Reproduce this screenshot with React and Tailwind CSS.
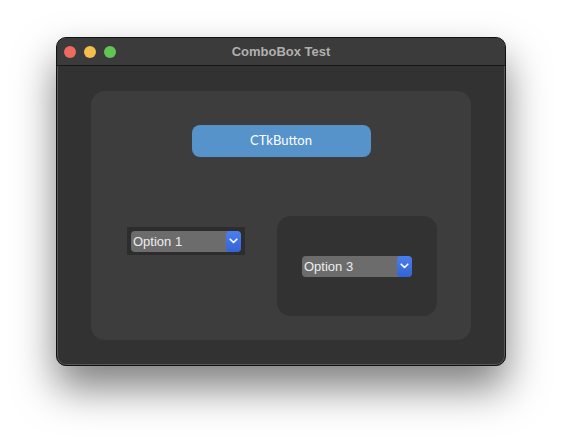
import React from "react";

const Chevron = () => (
    <svg width="9" height="6" viewBox="0 0 9 6" fill="none">
        <polyline points="1.2,1.2 4.5,4.5 7.8,1.2" stroke="white" strokeWidth="1.6" strokeLinecap="round" strokeLinejoin="round" />
    </svg>
);

const ComboBox = ({ value }) => (
    <div className="flex h-[21px] w-[110px] rounded-[4px] bg-[#6c6c6c] overflow-hidden">
        <div className="flex-1 flex items-center pl-[2px] text-[13px] text-[#ececec] leading-none" style={{ fontFamily: '"Liberation Sans", Arial, sans-serif' }}>
            {value}
        </div>
        <div className="w-[15px] flex items-center justify-center rounded-[4px] bg-gradient-to-b from-[#4a7ff0] to-[#3463d6]">
            <Chevron />
        </div>
    </div>
);

export default function App() {
    return (
        <div className="w-[562px] h-[440px] bg-white pl-[56px] pt-[37px]">
            <div className="w-[450px] h-[329px] rounded-[10px] border border-[#111] bg-[#323232] overflow-hidden flex flex-col shadow-[0_22px_40px_rgba(0,0,0,0.5),inset_0_0_0_1px_rgba(255,255,255,0.18)]">
                <div className="relative h-[28px] shrink-0 bg-[#3b3b3b] border-b border-[#161616] flex items-center justify-center">
                    <div className="absolute left-[7px] top-[8px] flex gap-[8px]">
                        <div className="w-[12px] h-[12px] rounded-full bg-[#ec6a5e]" />
                        <div className="w-[12px] h-[12px] rounded-full bg-[#f4be4f]" />
                        <div className="w-[12px] h-[12px] rounded-full bg-[#61c554]" />
                    </div>
                    <span className="text-[13px] font-bold text-[#b0b0b0] mt-[1px]" style={{ fontFamily: '"Liberation Sans", Arial, sans-serif' }}>ComboBox Test</span>
                </div>

                <div className="flex-1 pl-[34px] pt-[25px]">
                    <div className="w-[380px] h-[249px] rounded-[14px] bg-[#3d3d3d] flex flex-col">
                        <div className="flex justify-center pt-[34px]">
                            <button className="w-[179px] h-[32px] rounded-[8px] bg-[#5593ca] text-white text-[13px]" style={{ fontFamily: "Lato, sans-serif" }}>
                                CTkButton
                            </button>
                        </div>

                        <div className="flex items-start mt-[59px]">
                            <div className="ml-[36px] mt-[11px] w-[118px] h-[28px] bg-[#2d2d2d] flex items-center justify-center">
                                <ComboBox value="Option 1" />
                            </div>
                            <div className="ml-[32px] w-[160px] h-[100px] rounded-[14px] bg-[#323232] flex items-center justify-center">
                                <ComboBox value="Option 3" />
                            </div>
                        </div>
                    </div>
                </div>
            </div>
        </div>
    );
}
